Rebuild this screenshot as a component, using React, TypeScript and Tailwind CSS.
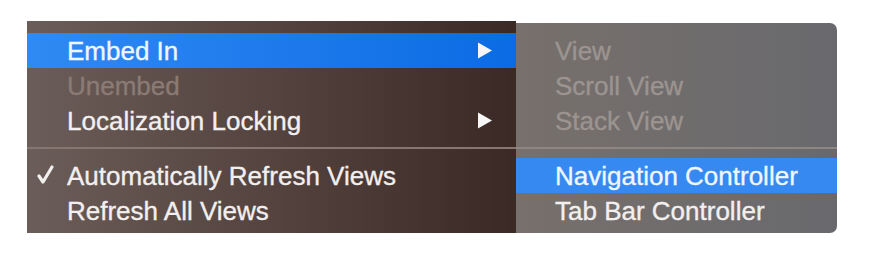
import React from "react";

type Item = { label?: string; disabled?: boolean; active?: boolean; checked?: boolean; submenu?: boolean; separator?: boolean };

const mainItems: Item[] = [
  { label: "Embed In", active: true, submenu: true },
  { label: "Unembed", disabled: true },
  { label: "Localization Locking", submenu: true },
  { separator: true },
  { label: "Automatically Refresh Views", checked: true },
  { label: "Refresh All Views" },
];

const subItems: Item[] = [
  { label: "View", disabled: true },
  { label: "Scroll View", disabled: true },
  { label: "Stack View", disabled: true },
  { separator: true },
  { label: "Navigation Controller", active: true },
  { label: "Tab Bar Controller" },
];

function Arrow() {
  return (
    <svg width="16" height="17" viewBox="0 0 16 17" className="shrink-0">
      <path d="M1 0.5 L15 8.5 L1 16.5 Z" fill="#f7f7f7" />
    </svg>
  );
}

function Check() {
  return (
    <svg width="17" height="19" viewBox="0 0 17 19">
      <path d="M2 11 L6 17 L15 2" fill="none" stroke="#f2f0ef" strokeWidth="3.2" strokeLinecap="round" strokeLinejoin="round" />
    </svg>
  );
}

export default function App() {
  return (
    <div className="h-[265px] w-[894px] bg-white" style={{ fontFamily: '"Liberation Sans", Arial, sans-serif' }}>
      <div className="flex pl-[27px] pt-[21px]">
        {/* main menu */}
        <div className="flex h-[212px] w-[489px] flex-col bg-gradient-to-r from-[#6b5d59] via-[#54433e] to-[#3a2924] pt-[12px]">
          {mainItems.map((item, i) =>
            item.separator ? (
              <div key={i} className="flex h-[20px] items-center">
                <div className="h-[2px] w-full bg-[#85776f]" />
              </div>
            ) : (
              <div
                key={i}
                className={
                  "relative flex h-[35px] items-center pl-[40px] pr-[23px] text-[26px] leading-none [-webkit-text-stroke:0.35px_currentColor] " +
                  (item.active ? "bg-gradient-to-r from-[#2f8af3] to-[#0a6be4] text-[#eef6ff]" : "") +
                  (item.disabled ? " text-[#8b7b75]" : item.active ? "" : " text-[#f3efee]")
                }
              >
                {item.checked && (
                  <span className="absolute left-[10px] top-[7px]">
                    <Check />
                  </span>
                )}
                <span className="flex-1">{item.label}</span>
                {item.submenu && <Arrow />}
              </div>
            )
          )}
        </div>

        {/* submenu */}
        <div className="mt-[2px] flex h-[210px] w-[321px] flex-col rounded-r-[7px] bg-gradient-to-r from-[#77706c] to-[#69696d] pt-[10px]">
          {subItems.map((item, i) =>
            item.separator ? (
              <div key={i} className="flex h-[20px] items-center">
                <div className="h-[2px] w-full bg-[#8e8683]" />
              </div>
            ) : (
              <div
                key={i}
                className={
                  "flex h-[35px] items-center pl-[39px] text-[26px] leading-none [-webkit-text-stroke:0.35px_currentColor] " +
                  (item.active ? "bg-[#3689f1] text-[#eef6ff]" : item.disabled ? "text-[#9c9490]" : "text-[#f3efee]")
                }
              >
                {item.label}
              </div>
            )
          )}
        </div>
      </div>
    </div>
  );
}
